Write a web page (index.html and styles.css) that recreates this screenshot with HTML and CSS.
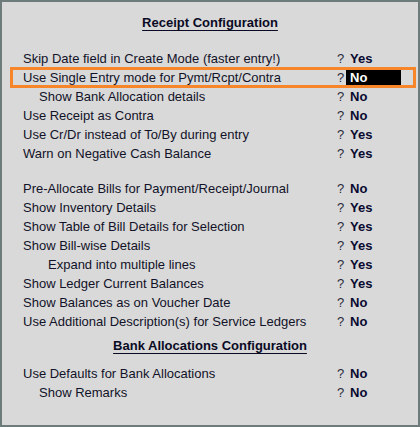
FILE: index.html
```html
<!DOCTYPE html>
<html>
<head>
<meta charset="utf-8">
<link rel="stylesheet" href="styles.css">
</head>
<body>
<div class="panel">
  <h1 class="title"><span>Receipt Configuration</span></h1>
  <div class="group first">
    <div class="row"><span class="label">Skip Date field in Create Mode (faster entry!)</span><span class="q">?</span><span class="val">Yes</span></div>
    <div class="row active"><span class="label">Use Single Entry mode for Pymt/Rcpt/Contra</span><span class="q">?</span><span class="val sel">No</span></div>
    <div class="row"><span class="label ind1">Show Bank Allocation details</span><span class="q">?</span><span class="val">No</span></div>
    <div class="row"><span class="label">Use Receipt as Contra</span><span class="q">?</span><span class="val">No</span></div>
    <div class="row"><span class="label">Use Cr/Dr instead of To/By during entry</span><span class="q">?</span><span class="val">Yes</span></div>
    <div class="row"><span class="label">Warn on Negative Cash Balance</span><span class="q">?</span><span class="val">Yes</span></div>
  </div>
  <div class="group second">
    <div class="row"><span class="label">Pre-Allocate Bills for Payment/Receipt/Journal</span><span class="q">?</span><span class="val">No</span></div>
    <div class="row"><span class="label">Show Inventory Details</span><span class="q">?</span><span class="val">Yes</span></div>
    <div class="row"><span class="label">Show Table of Bill Details for Selection</span><span class="q">?</span><span class="val">Yes</span></div>
    <div class="row"><span class="label">Show Bill-wise Details</span><span class="q">?</span><span class="val">Yes</span></div>
    <div class="row"><span class="label ind2">Expand into multiple lines</span><span class="q">?</span><span class="val">Yes</span></div>
    <div class="row"><span class="label">Show Ledger Current Balances</span><span class="q">?</span><span class="val">Yes</span></div>
    <div class="row"><span class="label">Show Balances as on Voucher Date</span><span class="q">?</span><span class="val">No</span></div>
    <div class="row"><span class="label">Use Additional Description(s) for Service Ledgers</span><span class="q">?</span><span class="val">No</span></div>
  </div>
  <h2 class="title sub"><span>Bank Allocations Configuration</span></h2>
  <div class="group third">
    <div class="row"><span class="label">Use Defaults for Bank Allocations</span><span class="q">?</span><span class="val">No</span></div>
    <div class="row"><span class="label ind1">Show Remarks</span><span class="q">?</span><span class="val">No</span></div>
  </div>
</div>
</body>
</html>
```

FILE: styles.css
```css
html, body {
  margin: 0;
  padding: 0;
  background: #d9d9d9;
}

.panel {
  width: 420px;
  height: 427px;
  box-sizing: border-box;
  border: 2px solid #6e7b7b;
  background: #d9d9d9;
  padding-top: 11px;
  font-family: "Liberation Sans", Arial, sans-serif;
  font-size: 13px;
  color: #121228;
}

.title {
  margin: 0;
  text-align: center;
  font-size: 13px;
  font-weight: bold;
  line-height: 19px;
  color: #0a0a24;
}

.title span {
  text-decoration: underline;
  text-underline-offset: 3px;
}

.title.sub {
  margin-top: 5px;
}

.group.first {
  margin-top: 17px;
}

.group.second {
  margin-top: 16px;
}

.group.third {
  margin-top: 9px;
}

.row {
  display: grid;
  grid-template-columns: 1fr 9px 55px;
  align-items: center;
  height: 19px;
  margin: 0 3px 0 9px;
  padding: 0 14px 0 12px;
}

.row.active {
  outline: 3px solid #f7862a;
  outline-offset: -2px;
}

.label {
  white-space: nowrap;
}

.ind1 {
  padding-left: 16px;
}

.ind2 {
  padding-left: 25px;
}

.q {
  color: #2a2a3a;
}

.val {
  font-weight: bold;
  color: #0a0a30;
  padding-left: 4px;
  line-height: 16px;
  height: 16px;
}

.val.sel {
  background: #000;
  color: #fff;
}
```
